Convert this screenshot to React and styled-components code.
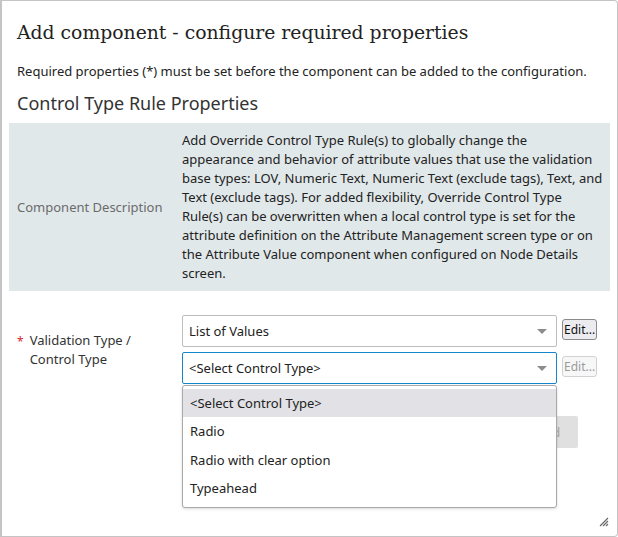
import React from 'react';
import styled, { createGlobalStyle } from 'styled-components';

const GlobalStyle = createGlobalStyle`
  html, body {
    margin: 0;
    padding: 0;
    background: #fff;
  }
  body {
    font-family: "Noto Sans", "Open Sans", sans-serif;
    font-size: 13px;
    color: #333;
  }
  * {
    box-sizing: border-box;
  }
`;

const Dialog = styled.div`
  position: relative;
  width: 618px;
  height: 537px;
  border: 1px solid #c4c4c4;
  border-left-width: 2px;
  border-radius: 0 4px 4px 0;
  padding: 19px 7px 0 7px;
  background: #fff;
`;

const Title = styled.h1`
  margin: 0;
  padding: 0 8px;
  font-family: "DejaVu Serif", "Liberation Serif", serif;
  font-weight: normal;
  font-size: 18.8px;
  line-height: 26px;
  color: #222;
`;

const Intro = styled.p`
  margin: 16px 0 0;
  padding: 0 8px;
  font-size: 13px;
  line-height: 18px;
  color: #222;
`;

const SectionTitle = styled.h2`
  margin: 10px 0 0;
  padding: 0 8px;
  font-weight: normal;
  font-size: 18px;
  line-height: 26px;
  color: #333;
`;

const InfoPanel = styled.div`
  display: grid;
  grid-template-columns: 165px 1fr;
  align-items: center;
  margin-top: 7px;
  padding: 8px 8px;
  background: #e1e8ea;
`;

const InfoLabel = styled.div`
  color: #6b6b6b;
  font-size: 13px;
`;

const InfoText = styled.div`
  font-size: 13px;
  line-height: 19px;
  color: #222;
  white-space: nowrap;
`;

const FormRow = styled.div`
  display: grid;
  grid-template-columns: 165px 1fr;
  margin-top: 24px;
  padding: 0 8px;
`;

const FieldLabel = styled.div`
  display: flex;
  gap: 6px;
  padding-top: 16px;
  line-height: 19px;
  color: #333;
`;

const Required = styled.span`
  color: #d9262c;
  font-size: 12px;
  line-height: 22px;
`;

const FieldColumn = styled.div`
  display: flex;
  flex-direction: column;
  gap: 5px;
`;

const SelectLine = styled.div`
  position: relative;
  display: flex;
  align-items: flex-start;
  gap: 5px;
`;

const SelectBox = styled.div`
  position: relative;
  display: flex;
  align-items: center;
  width: 375px;
  height: 32px;
  padding: 0 30px 0 6px;
  border: 1px solid ${(p) => (p.$focused ? '#1486cc' : '#bdbdbd')};
  border-radius: 2px;
  background: #fff;
  color: #222;
`;

const Arrow = styled.span`
  position: absolute;
  right: 9px;
  top: 50%;
  margin-top: -2px;
  width: 0;
  height: 0;
  border-left: 5px solid transparent;
  border-right: 5px solid transparent;
  border-top: 5px solid #8c8c8c;
`;

const EditButton = styled.button`
  margin-top: 4px;
  height: 21px;
  padding: 0 1px;
  font-family: inherit;
  font-size: 12px;
  line-height: 18px;
  border-radius: 3px;
  border: 1px solid ${(p) => (p.disabled ? '#d2d2d2' : '#8a8a8e')};
  background: ${(p) => (p.disabled ? '#f7f7f7' : '#ececf0')};
  color: ${(p) => (p.disabled ? '#9a9a9a' : '#111')};
`;

const Menu = styled.ul`
  position: absolute;
  top: 33px;
  left: 0;
  width: 375px;
  margin: 0;
  padding: 3px 0 5px;
  list-style: none;
  background: #fff;
  border: 1px solid #a9a9a9;
  border-radius: 3px;
  box-shadow: 0 1px 3px rgba(0, 0, 0, 0.15);
  z-index: 2;
`;

const MenuItem = styled.li`
  height: 28.3px;
  line-height: 28px;
  padding: 0 7px;
  color: #222;
  background: ${(p) => (p.$active ? '#e1e1e6' : 'transparent')};
`;

const Footer = styled.div`
  display: flex;
  justify-content: flex-end;
  margin-top: 32px;
  padding-right: 32px;
`;

const AddButton = styled.button`
  width: 60px;
  height: 32px;
  font-family: inherit;
  font-size: 13px;
  border: none;
  border-radius: 2px;
  background: #e0e0e0;
  color: #a8a8a8;
`;

const Grip = styled.svg`
  position: absolute;
  right: 8px;
  bottom: 9px;
`;

const options = ['<Select Control Type>', 'Radio', 'Radio with clear option', 'Typeahead'];

function App() {
  return (
    <>
      <GlobalStyle />
      <Dialog>
        <Title>Add component - configure required properties</Title>
        <Intro>
          Required properties (*) must be set before the component can be added to the
          configuration.
        </Intro>
        <SectionTitle>Control Type Rule Properties</SectionTitle>
        <InfoPanel>
          <InfoLabel>Component Description</InfoLabel>
          <InfoText>
            Add Override Control Type Rule(s) to globally change the
            <br />
            appearance and behavior of attribute values that use the validation
            <br />
            base types: LOV, Numeric Text, Numeric Text (exclude tags), Text, and
            <br />
            Text (exclude tags). For added flexibility, Override Control Type
            <br />
            Rule(s) can be overwritten when a local control type is set for the
            <br />
            attribute definition on the Attribute Management screen type or on
            <br />
            the Attribute Value component when configured on Node Details
            <br />
            screen.
          </InfoText>
        </InfoPanel>
        <FormRow>
          <FieldLabel>
            <Required>*</Required>
            <span>
              Validation Type /
              <br />
              Control Type
            </span>
          </FieldLabel>
          <FieldColumn>
            <SelectLine>
              <SelectBox>
                List of Values
                <Arrow />
              </SelectBox>
              <EditButton type="button">Edit...</EditButton>
            </SelectLine>
            <SelectLine>
              <SelectBox $focused>
                &lt;Select Control Type&gt;
                <Arrow />
              </SelectBox>
              <EditButton type="button" disabled>
                Edit...
              </EditButton>
              <Menu>
                {options.map((o, i) => (
                  <MenuItem key={o} $active={i === 0}>
                    {o}
                  </MenuItem>
                ))}
              </Menu>
            </SelectLine>
          </FieldColumn>
        </FormRow>
        <Footer>
          <AddButton type="button" disabled>
            Add
          </AddButton>
        </Footer>
        <Grip width="11" height="11" viewBox="0 0 11 11">
          <path d="M10 2 L2 10 M10 5 L5 10 M10 8 L8 10" stroke="#666" strokeWidth="1.1" fill="none" />
        </Grip>
      </Dialog>
    </>
  );
}

export default App;
